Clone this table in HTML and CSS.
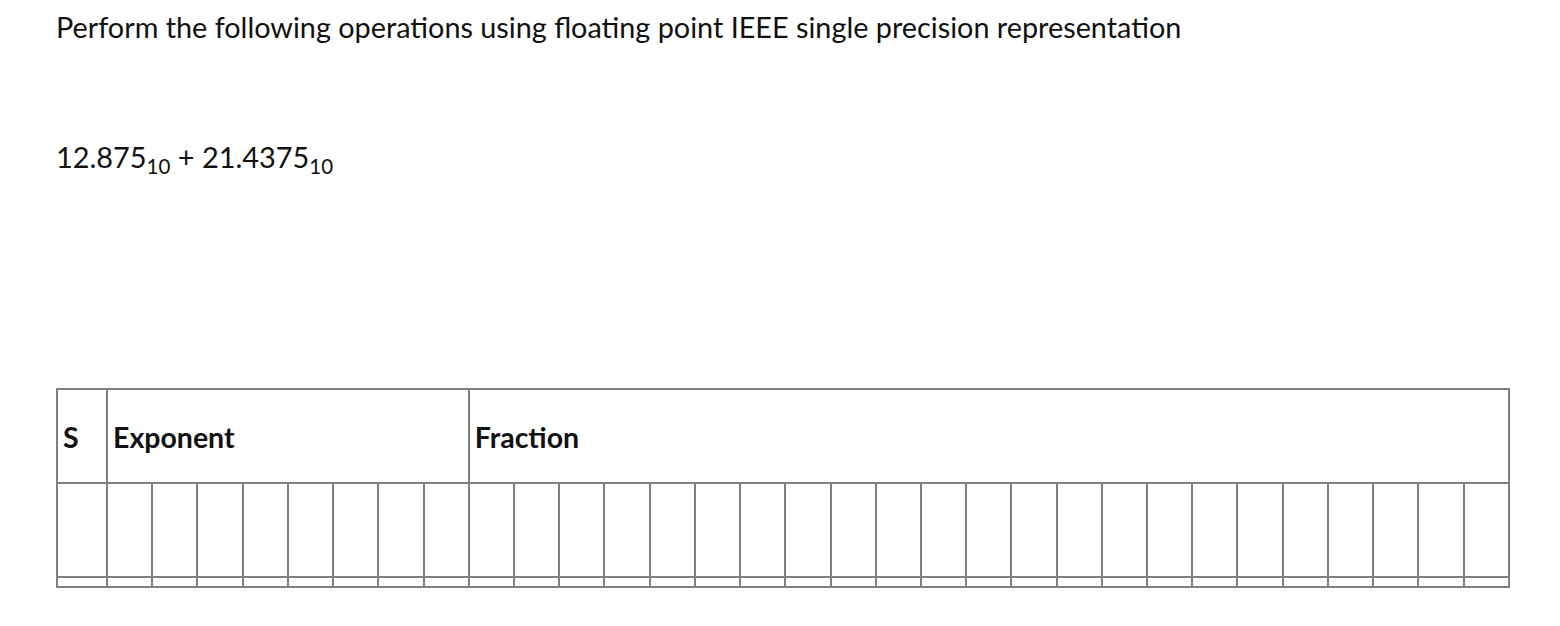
FILE: index.html
```html
<!DOCTYPE html>
<html>
<head>
<meta charset="utf-8">
<link rel="stylesheet" href="styles.css">
</head>
<body>
<div class="page">
  <p class="title">Perform the following operations using floating point IEEE single precision representation</p>
  <p class="expr">12.875<sub>10</sub> + 21.4375<sub>10</sub></p>
  <table class="ieee">
    <colgroup>
      <col class="c-s">
      <col><col><col><col><col><col><col><col>
      <col><col><col><col><col><col><col><col><col><col><col><col><col><col><col><col><col><col><col><col><col><col><col>
    </colgroup>
    <tr class="head">
      <td>S</td>
      <td colspan="8">Exponent</td>
      <td colspan="23">Fraction</td>
    </tr>
    <tr class="bits">
      <td></td><td></td><td></td><td></td><td></td><td></td><td></td><td></td>
      <td></td><td></td><td></td><td></td><td></td><td></td><td></td><td></td>
      <td></td><td></td><td></td><td></td><td></td><td></td><td></td><td></td>
      <td></td><td></td><td></td><td></td><td></td><td></td><td></td><td></td>
    </tr>
    <tr class="thin">
      <td></td><td></td><td></td><td></td><td></td><td></td><td></td><td></td>
      <td></td><td></td><td></td><td></td><td></td><td></td><td></td><td></td>
      <td></td><td></td><td></td><td></td><td></td><td></td><td></td><td></td>
      <td></td><td></td><td></td><td></td><td></td><td></td><td></td><td></td>
    </tr>
  </table>
</div>
</body>
</html>
```
FILE: styles.css
```css
html, body {
  margin: 0;
  padding: 0;
  background: #ffffff;
}
body {
  font-family: Lato, "Liberation Sans", sans-serif;
  color: #111111;
}
.page {
  padding: 0 0 0 56px;
}
.title {
  margin: 0;
  padding-top: 10px;
  font-size: 28.8px;
  line-height: 34px;
}
.expr {
  margin: 0;
  padding-top: 96px;
  font-size: 28.9px;
  line-height: 34px;
}
.expr sub {
  font-size: 20.5px;
  vertical-align: -6px;
  line-height: 0;
}
.ieee {
  margin-top: 214px;
  border-collapse: collapse;
  table-layout: fixed;
  width: 1454px;
}
.ieee col.c-s {
  width: 50px;
}
.ieee td {
  border: 2px solid #808080;
  padding: 0;
}
.head td {
  height: 90px;
  padding-top: 2px;
  font-weight: 700;
  font-size: 28.5px;
  line-height: 34px;
  padding-left: 5px;
  vertical-align: middle;
  color: #111111;
}
.bits td {
  height: 92px;
}
.thin td {
  height: 8px;
}
```
